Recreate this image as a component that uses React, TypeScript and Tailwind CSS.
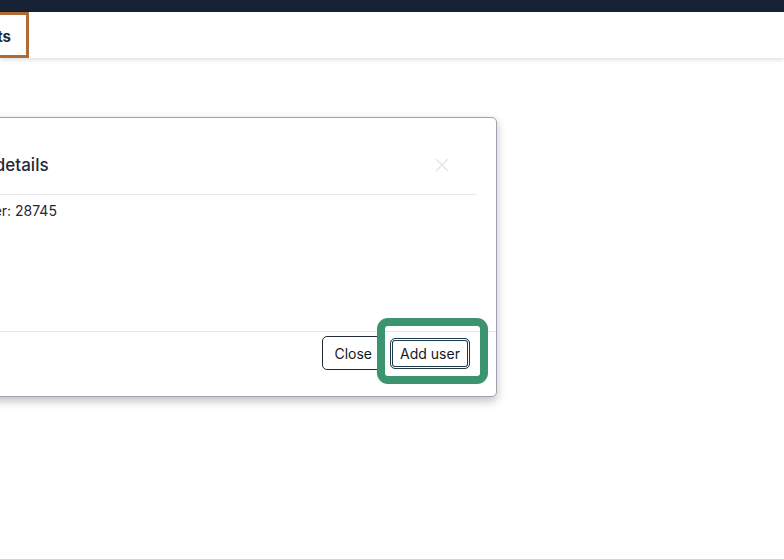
import React from "react";

export default function App() {
  return (
    <div
      className="relative w-[784px] h-[559px] overflow-hidden bg-white"
      style={{ fontFamily: "Inter, 'Noto Sans', sans-serif" }}
    >
      <div className="h-[12px] bg-[#172334]" />
      <div className="h-[46px] bg-white shadow-[0_2px_4px_rgba(0,0,0,0.12)] flex items-stretch">
        <div className="ml-[-60px] w-[89px] border-[3px] border-[#b06b35] flex items-center justify-end pr-[15px] pt-[4px] text-[15px] font-bold text-[#1f2937]">
          Contacts
        </div>
      </div>

      <div className="mt-[59px] ml-[-60px] w-[557px] h-[280px] bg-white border border-[#9ca3af] rounded-[5px] shadow-[0_4px_10px_rgba(0,0,0,0.25)] flex flex-col">
        <div className="mx-[20px] pt-[33px] pb-[15px] border-b border-[#e5e7eb] flex items-center justify-between">
          <div className="ml-[-9px] text-[17px] leading-[28px] font-medium text-[#1f2937]">
            User details
          </div>
          <svg width="16" height="16" viewBox="0 0 16 16" className="mr-[26px]">
            <path d="M2 2 L14 14 M14 2 L2 14" stroke="#e5e7eb" strokeWidth="1.6" />
          </svg>
        </div>
        <div className="flex-1 px-[20px] pt-[6px]">
          <div className="ml-[-9px] text-[14px] leading-[20px] text-[#1f2937]">Member: 28745</div>
          <div className="mt-[8px] ml-[-20px] w-[42px] h-[52px] border border-[#eef0f2] rounded-[4px]" />
        </div>
        <div className="border-t border-[#e5e7eb] h-[65px] flex items-start justify-end gap-[6px] pt-[4px] pr-[26px]">
          <button className="h-[34px] px-[11px] border border-[#1f2937] rounded-[5px] text-[14px] text-[#111827] bg-white">
            Close
          </button>
          <div className="relative mt-[2px]">
            <button className="h-[31px] w-[80px] border border-[#1e3a4f] rounded-[5px] text-[14px] text-[#111827] bg-white shadow-[inset_0_0_0_1px_#ffffff,inset_0_0_0_2px_#1e3a4f]">
              Add user
            </button>
            <div className="absolute left-[-13px] top-[-20px] w-[111px] h-[66px] border-[8px] border-[#3c9370] rounded-[11px] pointer-events-none" />
          </div>
        </div>
      </div>
    </div>
  );
}
